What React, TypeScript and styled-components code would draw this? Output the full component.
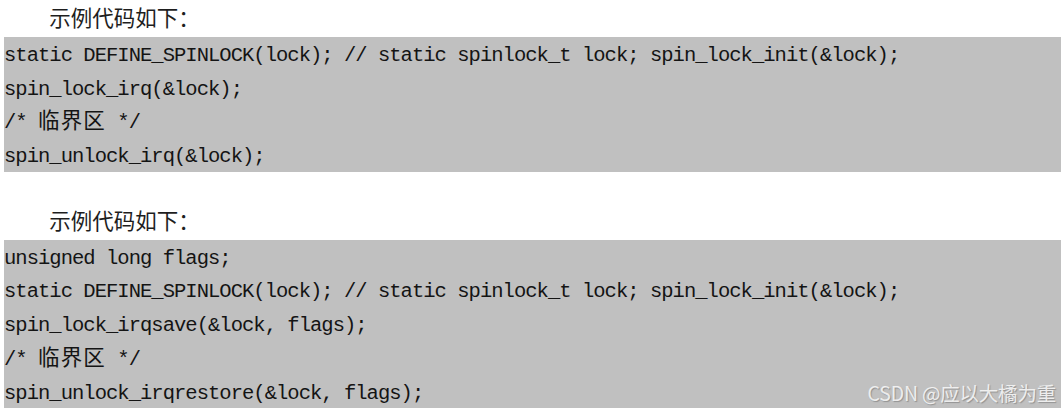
import React from "react";
import styled, { createGlobalStyle } from "styled-components";

const Global = createGlobalStyle`
  html, body { margin: 0; padding: 0; background: #ffffff; }
  body { width: 1061px; height: 411px; overflow: hidden; }
`;

const Page = styled.div`
  position: relative;
  display: flex;
  flex-direction: column;
  padding: 0 0 0 4px;
  width: 1061px;
  height: 411px;
  box-sizing: border-box;
`;

const Section = styled.section<{ $gap: number }>`
  display: flex;
  flex-direction: column;
  margin-top: ${(p) => p.$gap}px;
`;

const Lead = styled.p`
  margin: 0 0 3px 0;
  text-indent: 45.3px;
  font-family: "Noto Sans CJK SC", "Noto Sans CJK JP", sans-serif;
  font-weight: 400;
  font-size: 21.5px;
  line-height: 33.75px;
  color: #1e1e1e;
`;

const CodeBlock = styled.pre`
  margin: 0;
  padding: 0;
  background: #c0c0c0;
  font-family: "Liberation Mono", "DejaVu Sans Mono", monospace;
  font-size: 20.5px;
  letter-spacing: -0.97px;
  color: #141414;
  white-space: pre;
`;

const Line = styled.div`
  box-sizing: border-box;
  height: 33.75px;
  padding-top: 4px;
  line-height: 29.75px;
`;

const Cjk = styled.span`
  font-family: "Noto Sans CJK SC", "Noto Sans CJK JP", sans-serif;
  font-size: 21.5px;
  letter-spacing: 1.17px;
  line-height: 20px;
`;

const Watermark = styled.div`
  position: absolute;
  right: 5px;
  bottom: 6px;
  font-family: "Noto Sans CJK SC", "Noto Sans", sans-serif;
  font-size: 19.5px;
  line-height: 24px;
  color: rgba(250, 250, 250, 0.85);
  text-shadow: 1px 1px 1px rgba(90, 90, 90, 0.45);
  letter-spacing: -0.2px;
`;

type Piece = string | { cjk: string };

const block1: Piece[][] = [
  ["static DEFINE_SPINLOCK(lock); // static spinlock_t lock; spin_lock_init(&lock);"],
  ["spin_lock_irq(&lock);"],
  ["/* ", { cjk: "临界区" }, " */"],
  ["spin_unlock_irq(&lock);"],
];

const block2: Piece[][] = [
  ["unsigned long flags;"],
  ["static DEFINE_SPINLOCK(lock); // static spinlock_t lock; spin_lock_init(&lock);"],
  ["spin_lock_irqsave(&lock, flags);"],
  ["/* ", { cjk: "临界区" }, " */"],
  ["spin_unlock_irqrestore(&lock, flags);"],
];

function Code({ lines }: { lines: Piece[][] }) {
  return (
    <CodeBlock>
      {lines.map((pieces, i) => (
        <Line key={i}>
          {pieces.map((p, j) =>
            typeof p === "string" ? (
              <React.Fragment key={j}>{p}</React.Fragment>
            ) : (
              <Cjk key={j}>{p.cjk}</Cjk>
            )
          )}
        </Line>
      ))}
    </CodeBlock>
  );
}

export default function App() {
  return (
    <>
      <Global />
      <Page>
        <Section $gap={0}>
          <Lead>示例代码如下：</Lead>
          <Code lines={block1} />
        </Section>
        <Section $gap={31}>
          <Lead>示例代码如下：</Lead>
          <Code lines={block2} />
        </Section>
        <Watermark>CSDN @应以大橘为重</Watermark>
      </Page>
    </>
  );
}
